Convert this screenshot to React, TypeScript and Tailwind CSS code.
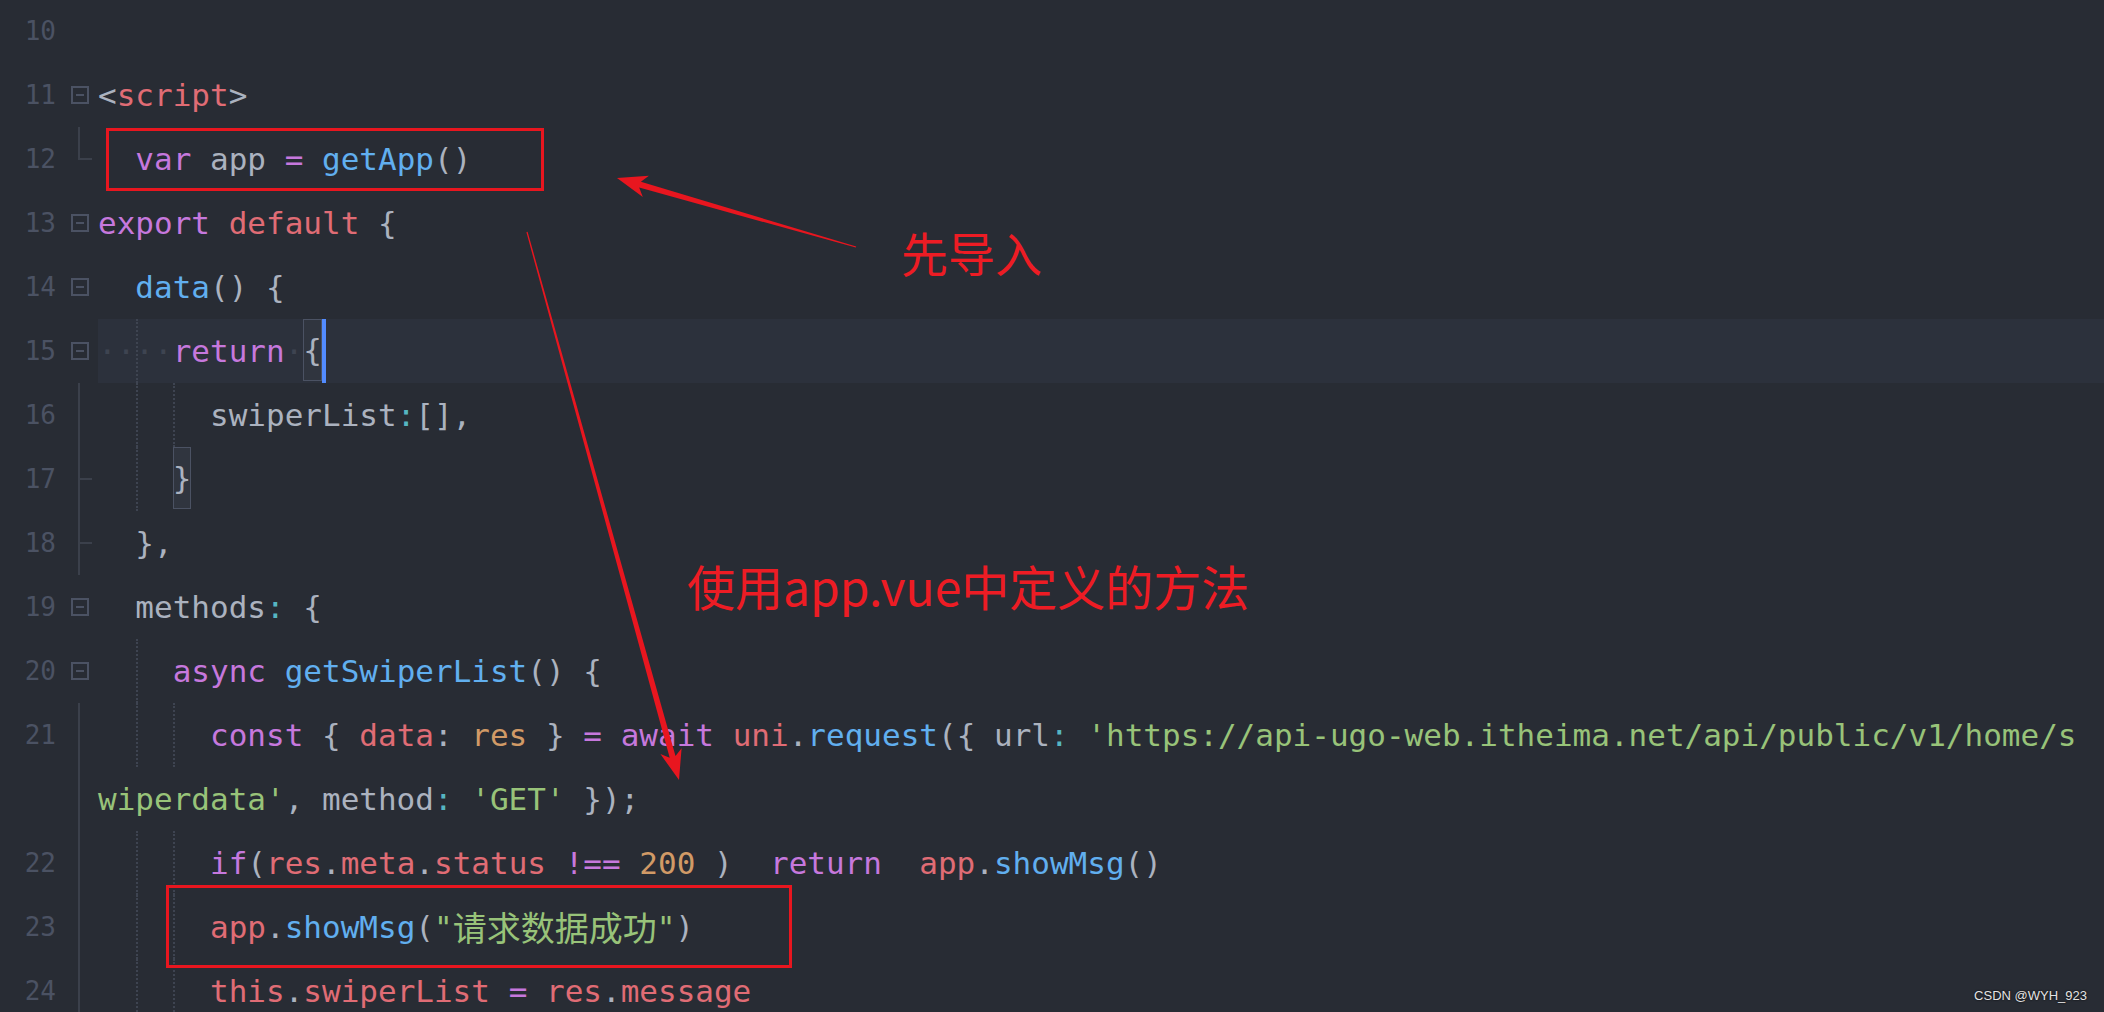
import React from 'react';

// [text, colour class, kind]
type Tok = [string, string, ('box' | 'cursor')?];
type Gutter = 'none' | 'fold' | 'end' | 'line' | 'tick';

interface Row {
  num?: string;
  gutter: Gutter;
  guides?: number[];
  toks: Tok[];
  current?: boolean;
}

// one dark palette
const fg = 'text-[#abb2bf]';
const kw = 'text-[#c678dd]';
const fn = 'text-[#61afef]';
const rd = 'text-[#e06c75]';
const str = 'text-[#98c379]';
const num = 'text-[#d19a66]';
const cy = 'text-[#56b6c2]';
const ws = 'text-[#3e4451]';

const rows: Row[] = [
  { num: '10', gutter: 'none', toks: [] },
  { num: '11', gutter: 'fold', toks: [['<', fg], ['script', rd], ['>', fg]] },
  {
    num: '12',
    gutter: 'end',
    toks: [['  ', fg], ['var', kw], [' app ', fg], ['=', kw], [' ', fg], ['getApp', fn], ['()', fg]],
  },
  { num: '13', gutter: 'fold', toks: [['export', kw], [' ', fg], ['default', rd], [' {', fg]] },
  { num: '14', gutter: 'fold', toks: [['  ', fg], ['data', fn], ['() {', fg]] },
  {
    num: '15',
    gutter: 'fold',
    guides: [2],
    current: true,
    toks: [['····', ws], ['return', kw], ['·', ws], ['{', fg, 'box'], ['', '', 'cursor']],
  },
  { num: '16', gutter: 'line', guides: [2, 4], toks: [['      swiperList', fg], [':', cy], ['[],', fg]] },
  { num: '17', gutter: 'tick', guides: [2], toks: [['    ', fg], ['}', fg, 'box']] },
  { num: '18', gutter: 'tick', toks: [['  },', fg]] },
  { num: '19', gutter: 'fold', toks: [['  methods', fg], [':', cy], [' {', fg]] },
  {
    num: '20',
    gutter: 'fold',
    guides: [2],
    toks: [['    ', fg], ['async', kw], [' ', fg], ['getSwiperList', fn], ['() {', fg]],
  },
  {
    num: '21',
    gutter: 'line',
    guides: [2, 4],
    toks: [
      ['      ', fg],
      ['const', kw],
      [' { ', fg],
      ['data', rd],
      [': ', fg],
      ['res', num],
      [' } ', fg],
      ['=', kw],
      [' ', fg],
      ['await', kw],
      [' ', fg],
      ['uni', rd],
      ['.', fg],
      ['request', fn],
      ['({ ', fg],
      ['url', fg],
      [':', cy],
      [' ', fg],
      ["'https://api-ugo-web.itheima.net/api/public/v1/home/s", str],
    ],
  },
  {
    gutter: 'line',
    toks: [["wiperdata'", str], [', ', fg], ['method', fg], [':', cy], [' ', fg], ["'GET'", str], [' });', fg]],
  },
  {
    num: '22',
    gutter: 'line',
    guides: [2, 4],
    toks: [
      ['      ', fg],
      ['if', kw],
      ['(', fg],
      ['res', rd],
      ['.', fg],
      ['meta', rd],
      ['.', fg],
      ['status', rd],
      [' ', fg],
      ['!==', kw],
      [' ', fg],
      ['200', num],
      [' )  ', fg],
      ['return', kw],
      ['  ', fg],
      ['app', rd],
      ['.', fg],
      ['showMsg', fn],
      ['()', fg],
    ],
  },
  {
    num: '23',
    gutter: 'line',
    guides: [2, 4],
    toks: [['      ', fg], ['app', rd], ['.', fg], ['showMsg', fn], ['(', fg], ['"', str], ['请求数据成功', str], ['"', str], [')', fg]],
  },
  {
    num: '24',
    gutter: 'line',
    guides: [2, 4],
    toks: [
      ['      ', fg],
      ['this', rd],
      ['.', fg],
      ['swiperList', rd],
      [' ', fg],
      ['=', kw],
      [' ', fg],
      ['res', rd],
      ['.', fg],
      ['message', rd],
    ],
  },
];

const guideLeft: Record<number, string> = { 2: 'left-[38px]', 4: 'left-[75px]' };

function GutterCell({ row }: { row: Row }) {
  return (
    <div className="relative flex h-full w-[98px] shrink-0 items-center">
      <span className="w-[56px] text-right text-[26px] text-[#4b5263]">{row.num ?? ''}</span>
      {row.gutter === 'fold' && (
        <span className="ml-[15px] flex h-[18px] w-[18px] items-center justify-center border-2 border-[#4b5263]">
          <span className="h-[2px] w-[8px] bg-[#4b5263]" />
        </span>
      )}
      {row.gutter === 'end' && (
        <>
          <span className="absolute left-[78px] top-0 h-[33px] w-[2px] bg-[#3b404b]" />
          <span className="absolute left-[78px] top-[31px] h-[2px] w-[14px] bg-[#3b404b]" />
        </>
      )}
      {(row.gutter === 'line' || row.gutter === 'tick') && (
        <span className="absolute bottom-0 left-[78px] top-0 w-[2px] bg-[#3b404b]" />
      )}
      {row.gutter === 'tick' && <span className="absolute left-[78px] top-[31px] h-[2px] w-[14px] bg-[#3b404b]" />}
    </div>
  );
}

function Token({ tok }: { tok: Tok }) {
  const [t, c, kind] = tok;
  if (kind === 'cursor') return <span className="w-[4px] self-stretch bg-[#528bff]" />;
  if (kind === 'box')
    return (
      <span
        className={`flex h-[62px] w-[18.66px] items-center justify-center self-start border border-[#4b5263] bg-[#30353f] ${c}`}
      >
        {t}
      </span>
    );
  if (/[\u4e00-\u9fff]/.test(t))
    return <span className={`font-['Noto_Sans_CJK_SC',sans-serif] text-[34px] leading-none ${c}`}>{t}</span>;
  return <span className={c}>{t}</span>;
}

function CodeRow({ row }: { row: Row }) {
  return (
    <div className="flex h-[64px] items-center">
      <GutterCell row={row} />
      <div className={`relative flex h-full flex-1 items-center whitespace-pre ${row.current ? 'bg-[#2c313c]' : ''}`}>
        {row.guides?.map((g) => (
          <span key={g} className={`absolute bottom-0 top-0 border-l-2 border-dotted border-[#3e4451] ${guideLeft[g]}`} />
        ))}
        <div className="relative flex h-full items-center">
          {row.toks.map((tok, i) => (
            <Token key={i} tok={tok} />
          ))}
        </div>
      </div>
    </div>
  );
}

export default function App() {
  return (
    <div className="relative h-[1012px] w-[2104px] overflow-hidden bg-[#282c34] font-['DejaVu_Sans_Mono','Noto_Sans_CJK_SC',monospace] text-[31px] leading-none">
      <div className="-mt-px flex flex-col">
        {rows.map((r, i) => (
          <CodeRow key={i} row={r} />
        ))}
      </div>

      {/* screenshot annotations drawn on top */}
      <div className="absolute left-[106px] top-[128px] h-[63px] w-[438px] border-[3px] border-[#e8161f]" />
      <div className="absolute left-[166px] top-[885px] h-[83px] w-[626px] border-[3px] border-[#e8161f]" />

      <svg className="pointer-events-none absolute inset-0" width="2104" height="1012" viewBox="0 0 2104 1012">
        <polygon
          fill="#e8161f"
          points="856.2,246.4 640.9,181.8 648.9,175.7 617,178 642.8,196.9 639.2,187.5 855.8,247.6"
        />
        <polygon
          fill="#e8161f"
          points="527.6,231.8 675.5,756.1 681.6,748.2 679,780 660.4,754 669.7,757.7 526.4,232.2"
        />
      </svg>

      <div className="absolute left-[901px] top-[224px] font-['Noto_Sans_CJK_SC',sans-serif] text-[47px] leading-[56px] text-[#ed1c24]">
        先导入
      </div>
      <div className="absolute left-[687px] top-[555px] font-['Noto_Sans_CJK_SC',sans-serif] text-[48px] leading-[60px] text-[#ed1c24]">
        使用app.vue中定义的方法
      </div>

      <div className="absolute bottom-[10px] right-[17px] font-['Liberation_Sans',Arial,sans-serif] text-[13px] text-[#e4e4e4] [text-shadow:0_0_2px_#000]">
        CSDN @WYH_923
      </div>
    </div>
  );
}
